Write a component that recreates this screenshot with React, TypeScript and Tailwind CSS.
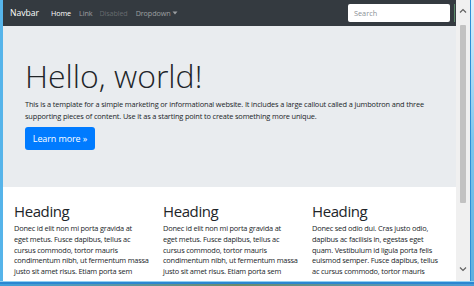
const col1 = [
  "Donec id elit non mi porta gravida at",
  "eget metus. Fusce dapibus, tellus ac",
  "cursus commodo, tortor mauris",
  "condimentum nibh, ut fermentum massa",
  "justo sit amet risus. Etiam porta sem",
];
const col3 = [
  "Donec sed odio dui. Cras justo odio,",
  "dapibus ac facilisis in, egestas eget",
  "quam. Vestibulum id ligula porta felis",
  "euismod semper. Fusce dapibus, tellus",
  "ac cursus commodo, tortor mauris",
];

function Col({ lines }: { lines: string[] }) {
  return (
    <div className="w-[149px] shrink-0">
      <h2 className="text-[15px] leading-[16px] tracking-[-0.4px] mt-[16px] text-[#212529] whitespace-nowrap">Heading</h2>
      <div className="mt-[4px] text-[7.4px] leading-[10.8px] tracking-[-0.2px] text-[#212529]">
        {lines.map((l) => (
          <div key={l} className="whitespace-nowrap">{l}</div>
        ))}
      </div>
    </div>
  );
}

export default function App() {
  return (
    <div className="w-[474px] h-[286px] overflow-hidden flex flex-col bg-[#4aa8e0] font-['Open_Sans',sans-serif]">
      <div className="h-[281px] flex shrink-0">
        <div className="w-[3px] bg-[#56b4ea]" />
        <div className="w-[453px] flex flex-col bg-white overflow-hidden">
          <nav className="h-[26px] shrink-0 bg-[#343a40] flex items-center pl-[7px] relative">
            <span className="text-white text-[8.6px] whitespace-nowrap">Navbar</span>
            <div className="flex items-center ml-[12px] text-[7.2px] tracking-[-0.1px] whitespace-nowrap">
              <span className="text-white">Home</span>
              <span className="text-white/50 ml-[8px]">Link</span>
              <span className="text-white/25 ml-[7px]">Disabled</span>
              <span className="text-white/50 ml-[8px] flex items-center">
                Dropdown
                <svg width="6" height="4" viewBox="0 0 6 4" className="ml-[2px]">
                  <path d="M0.5 0.5 L5.5 0.5 L3 3.5 Z" fill="currentColor" />
                </svg>
              </span>
            </div>
            <div className="ml-auto flex items-center">
              <div className="w-[102px] h-[18px] bg-white rounded-[2px] flex items-center pl-[6px] text-[7.3px] text-[#8a9096]">
                Search
              </div>
              <div className="w-[2px] h-[18px] ml-[4px] border-l border-[#5b8a6a]" />
            </div>
          </nav>
          <div className="h-[161px] shrink-0 bg-[#e9ecef] pl-[22px] pt-[34px]">
            <h1 className="text-[32px] leading-[32px] font-light text-[#212529] whitespace-nowrap">Hello, world!</h1>
            <div className="mt-[7px] text-[7.4px] leading-[11.5px] tracking-[-0.15px] text-[#212529]">
              <div className="whitespace-nowrap">
                This is a template for a simple marketing or informational website. It includes a large callout called a jumbotron and three
              </div>
              <div className="whitespace-nowrap">
                supporting pieces of content. Use it as a starting point to create something more unique.
              </div>
            </div>
            <div className="mt-[5px] w-[70px] h-[23px] bg-[#007bff] rounded-[3px] flex items-center justify-center text-white text-[9px] tracking-[-0.1px] whitespace-nowrap">
              Learn more »
            </div>
          </div>
          <div className="flex pl-[11px]">
            <Col lines={col1} />
            <Col lines={col1} />
            <Col lines={col3} />
          </div>
        </div>
        <div className="w-[14px] bg-[#f0f0f0] flex flex-col items-center">
          <svg width="8" height="6" viewBox="0 0 8 6" className="mt-[8px]">
            <path d="M1 4.5 L4 1.5 L7 4.5" stroke="#606060" strokeWidth="1.2" fill="none" />
          </svg>
          <div className="mt-[11px] w-[6px] h-[178px] bg-[#c2c2c2] rounded-[1px]" />
          <div className="flex-1" />
          <svg width="8" height="6" viewBox="0 0 8 6" className="mb-[9px]">
            <path d="M1 1.5 L4 4.5 L7 1.5" stroke="#606060" strokeWidth="1.2" fill="none" />
          </svg>
        </div>
        <div className="w-[4px] flex">
          <div className="w-[1px] bg-[#2e8fd6]" />
          <div className="flex-1 bg-gradient-to-b from-[#dff1fb] via-[#7cc6ee] to-[#5db0e0]" />
        </div>
      </div>
      <div className="h-[1px] bg-[#8fd0f2]" />
      <div className="h-[2px] bg-[#2b86d2]" />
      <div className="flex-1 bg-gradient-to-r from-[#3f9fdc] via-[#6b8a6a] to-[#4a9bd6]" />
    </div>
  );
}
